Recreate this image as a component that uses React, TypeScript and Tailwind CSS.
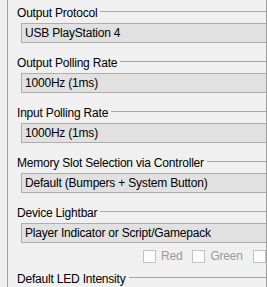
import React from 'react';

const GroupLabel: React.FC<{ text: string; className?: string }> = ({ text, className = '' }) => (
  <div className={`flex items-start h-[14px] ${className}`}>
    <span className="leading-[14px] whitespace-nowrap">{text}</span>
    <div className="flex-1 h-px mt-[5px] ml-[3px] bg-[#a8a8a8]" />
  </div>
);

const Combo: React.FC<{ value: string }> = ({ value }) => (
  <div className="mt-[3px] ml-[4px] -mr-[3px] h-[20px] border border-[#adadad] bg-[#e1e1e1] pl-[3px] leading-[18px] whitespace-nowrap">
    {value}
  </div>
);

const Check: React.FC<{ label?: string; className?: string }> = ({ label, className = '' }) => (
  <div className={`flex items-center shrink-0 ${className}`}>
    <div className="w-[13px] h-[13px] border border-[#c2c2c2] bg-[#fcfcfc]" />
    {label && <span className="ml-[5px] leading-[13px] text-[#9a9a9a]">{label}</span>}
  </div>
);

const groups = [
  { label: 'Output Protocol', value: 'USB PlayStation 4' },
  { label: 'Output Polling Rate', value: '1000Hz (1ms)' },
  { label: 'Input Polling Rate', value: '1000Hz (1ms)' },
  { label: 'Memory Slot Selection via Controller', value: 'Default (Bumpers + System Button)' },
  { label: 'Device Lightbar', value: 'Player Indicator or Script/Gamepack' },
];

const App: React.FC = () => {
  return (
    <div
      className="w-[267px] h-[287px] bg-[#f0f0f0] overflow-hidden text-[12px] tracking-[-0.2px] text-black"
      style={{ fontFamily: '"Liberation Sans", Arial, sans-serif' }}
    >
      <div className="ml-[7px] w-[260px] h-[287px] border-l border-r border-[#a0a0a0] overflow-hidden">
        <div className="pl-[9px]">
          {groups.map((g, i) => (
            <div key={g.label} className={i === 0 ? 'pt-[6px]' : 'pt-[13px]'}>
              <GroupLabel text={g.label} />
              <Combo value={g.value} />
            </div>
          ))}

          {/* lightbar colour toggles (disabled); the third one's label is past the edge */}
          <div className="flex mt-[7px] h-[13px] pl-[126px]">
            <Check label="Red" />
            <Check label="Green" className="ml-[10px]" />
            <Check className="ml-[10px]" />
          </div>

          <GroupLabel text="Default LED Intensity" className="mt-[9px]" />
        </div>
      </div>
    </div>
  );
};

export default App;
